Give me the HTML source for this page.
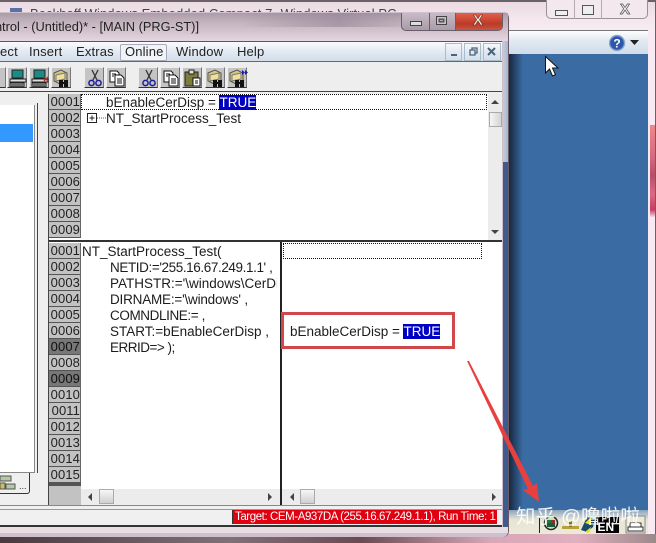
<!DOCTYPE html>
<html><head><meta charset="utf-8"><style>
html,body{margin:0;padding:0}
#p{position:relative;width:656px;height:543px;overflow:hidden;background:#f4e6ee;font-family:"Liberation Sans","Noto Sans CJK SC",sans-serif;color:#1a1a1a}
#p div,#p span.a{position:absolute}
.t{font-size:13.5px;line-height:16px;white-space:pre;color:#1c1c1c}
.l{position:static!important;display:block}
.i{position:static!important;display:block;padding-left:28px}
.n{left:49px;width:31px;height:15px;background:#c2c2c2;border-bottom:1px solid #555;border-right:1px solid #666;font-size:13px;line-height:16px;text-align:right;color:#222;letter-spacing:.1px;box-sizing:content-box;overflow:hidden}
.d{background:#777!important;color:#111!important}
.m{font-size:13px;line-height:16px;top:44px;white-space:pre;color:#222;letter-spacing:.15px}
.b{top:67px;width:20px;height:21px;background:#c4c4c4;border-bottom:1px solid #333;border-right:1px solid #777;border-top:1px solid #eee;border-left:1px solid #eee;box-sizing:border-box}
.b svg{position:absolute;left:0;top:0}
.hl{background:#0000c4;color:#fff}
</style></head><body><div id="p">
<svg width="0" height="0" style="position:absolute"><defs>
<symbol id="sc" viewBox="0 0 20 21"><path d="M7 2l5 10M13 2L8 12" stroke="#333" stroke-width="1.3" fill="none"/><circle cx="6.5" cy="15" r="2.6" fill="none" stroke="#1c1c9c" stroke-width="1.5"/><circle cx="13.5" cy="15" r="2.6" fill="none" stroke="#1c1c9c" stroke-width="1.5"/></symbol>
<symbol id="co" viewBox="0 0 20 21"><path d="M3 3h7l2 2v9H3z" fill="#fff" stroke="#111"/><path d="M8 7h6l3 3v8H8z" fill="#fff" stroke="#111"/><path d="M5 6h4M5 8h2M10 11h5M10 13h5M10 15h5" stroke="#111"/></symbol>
<symbol id="pa" viewBox="0 0 20 21"><rect x="2" y="4" width="13" height="14" fill="#7c7c3c" stroke="#222"/><rect x="6" y="2" width="5" height="4" fill="#ddd" stroke="#222"/><path d="M10 10h7v8h-7z" fill="#fff" stroke="#111"/><path d="M12 13h3M12 15h3" stroke="#111"/></symbol>
<symbol id="bi" viewBox="0 0 20 21"><path d="M2 5l7-3 6 3v8l-7 3-6-3z" fill="#d8c878" stroke="#555"/><path d="M4 7l9-2v6l-9 2z" fill="#eee0a0" stroke="#777"/><path d="M7 12h4v7H7zM12 12h4v7h-4z" fill="#111"/><path d="M10 14h3v2h-3z" fill="#111"/></symbol>
<symbol id="pc" viewBox="0 0 20 21"><rect x="4" y="2" width="11" height="8" fill="#1d8a86" stroke="#222"/><rect x="2" y="11" width="16" height="3" fill="#ddd" stroke="#222"/><path d="M2 15h14v4H2z" fill="#bbb" stroke="#222"/><path d="M4 16v3M6 16v3M8 16v3M10 16v3M12 16v3M14 16v3" stroke="#222"/></symbol>
</defs></svg>

<!-- outer window chrome -->
<div style="left:0;top:0;width:656px;height:30px;background:linear-gradient(#e9d8e0,#f3e6ec 60%,#f6ecf1)"></div>
<div style="left:0;top:0;width:656px;height:2px;background:#6a6068"></div>
<div style="left:10px;top:8px;width:12px;height:5px;background:#5a6ea8"></div>
<div style="left:30px;top:6px;font-size:13px;line-height:16px;white-space:pre;color:#444;letter-spacing:.08px">Beckhoff Windows Embedded Compact 7- Windows Virtual PC</div>
<div style="left:546px;top:0;width:102px;height:19px;background:#f3e8ee;border:1px solid #9a9098;border-top:0;border-radius:0 0 5px 5px;box-sizing:border-box"></div>
<div style="left:574px;top:0;width:1px;height:19px;background:#b5aab2"></div>
<div style="left:601px;top:0;width:1px;height:19px;background:#b5aab2"></div>
<div style="left:555px;top:10px;width:11px;height:4px;border:1px solid #555;background:#eee"></div>
<div style="left:582px;top:5px;width:10px;height:8px;border:1px solid #555;background:#eee"></div>
<div style="left:620px;top:1px;font-size:15px;font-weight:bold;line-height:18px;color:#eee;-webkit-text-stroke:.7px #555">X</div>

<!-- right panel -->
<div style="left:509px;top:30px;width:139px;height:24px;background:linear-gradient(#fdfdfe,#e2e9f2 40%,#cfdbe9);border-top:1px solid #777"></div>
<div style="left:509px;top:54px;width:139px;height:458px;background:#3a6ca3"></div>
<div style="left:509px;top:54px;width:14px;height:458px;background:linear-gradient(90deg,#17283f,#3a6ca3)"></div>
<svg style="position:absolute;left:609px;top:34px" width="36" height="18"><circle cx="8" cy="9" r="7.5" fill="#2b57ad" stroke="#8ea4ca" stroke-width="1.4"/><text x="8" y="13.5" font-family="Liberation Sans" font-size="12" font-weight="bold" text-anchor="middle" fill="#fff">?</text><path d="M21 6h9l-4.5 5z" fill="#222"/></svg>
<svg style="position:absolute;left:544px;top:55px" width="16" height="24"><path d="M1.5 1.5v16.5l4-4 3 7 3-1.3-3-6.7h5.5z" fill="#fff" stroke="#111"/></svg>
<!-- right edge -->
<div style="left:648px;top:30px;width:7px;height:513px;background:#f8e9f2"></div>
<div style="left:650px;top:125px;width:5px;height:92px;background:linear-gradient(#e88,#d56a80 35%,#b45068 55%,#dc6a84 75%,#c43e62 92%,#f3dbe6)"></div>
<div style="left:655px;top:0;width:1px;height:543px;background:#6a6068"></div>
<!-- tray -->
<div style="left:509px;top:510px;width:139px;height:24px;background:linear-gradient(#88a4bf,#e6e4d4 40%,#ece9d8)"></div>
<div style="left:0;top:534px;width:656px;height:9px;background:linear-gradient(90deg,#4a3a40,#807078 35%,#6a4a54 55%,#d8a8b8 75%,#e0b0c0 88%,#9a8a8a)"></div>
<div style="left:539px;top:518px;width:1px;height:15px;background:#222"></div>
<svg style="position:absolute;left:541px;top:513px" width="108" height="21">
<circle cx="10" cy="10" r="6.5" fill="#cfe0c0" stroke="#222" stroke-width="1.5"/><path d="M6 7h4v3H6z" fill="#1d7a3a"/><path d="M10 7h4v3h-4z" fill="#9a2a2a"/><path d="M6 10h8v4H6z" fill="#1d5a3a"/>
<path d="M21 13h17v3H21z" fill="#b8a03a"/><path d="M28 8h3v6h-3z" fill="#8a7020"/>
<path d="M46 4l8 2-2 8-6 5-6-2z" fill="#1a4a6a"/><path d="M44 10l6-6v8zM44 19l6-5-2 6z" fill="#e8e020"/>
<rect x="55" y="4" width="23" height="16" fill="#000"/><text x="56.5" y="18" font-family="Liberation Sans" font-weight="bold" font-size="12" fill="#fff">EN</text>
<rect x="85" y="3" width="19" height="17" fill="#ece9d8" stroke="#888"/><path d="M87 14h15v4H87zM89 10h11v4H89z" fill="#fff" stroke="#333"/>
</svg>
<div style="left:516px;top:503px;font-size:19.5px;line-height:28px;color:#fff;white-space:pre;letter-spacing:.2px;opacity:.9">知乎 @噜啦啦</div>

<!-- main window -->
<div style="left:0;top:12px;width:509px;height:525px;background:#cfc0cc;border-right:1px solid #6a5a66;border-radius:0 6px 6px 0;box-sizing:border-box;overflow:hidden"></div>
<div style="left:503px;top:40px;width:5px;height:122px;background:linear-gradient(90deg,#c4ccdc,#aab6cc)"></div>
<div style="left:503px;top:162px;width:5px;height:368px;background:#3e5a8e"></div>
<div style="left:0;top:13px;width:508px;height:28px;background:linear-gradient(#ac9ca8,#c2b2bc 30%,#d6c5d0 70%,#e4d8e2)"></div>
<div style="left:240px;top:13px;width:180px;height:14px;background:linear-gradient(90deg,rgba(150,125,140,0),#8f7f92 55%,rgba(150,125,140,0));opacity:.55"></div>
<div style="left:0;top:19px;width:199px;height:16px;overflow:hidden"><div style="right:0;top:0;font-size:12.8px;line-height:16px;white-space:pre;color:#222">ntrol - (Untitled)* - [MAIN (PRG-ST)]</div></div>
<div style="left:401px;top:13px;width:102px;height:18px;background:linear-gradient(#c9bac8,#a99ba8);border:1px solid #6a5e6a;border-top:0;border-radius:0 0 5px 5px;box-sizing:border-box;overflow:hidden">
<div style="left:53px;top:0;width:49px;height:18px;background:linear-gradient(#e4604a,#bb3a28 60%,#c85a48)"></div>
<div style="left:27px;top:0;width:1px;height:18px;background:#6a5e6a"></div>
<div style="left:53px;top:0;width:1px;height:18px;background:#6a5e6a"></div>
<div style="left:8px;top:8px;width:10px;height:3px;border:1px solid #444;background:#ddd"></div>
<div style="left:34px;top:3px;width:9px;height:7px;border:1px solid #444;box-shadow:inset 0 0 0 1.5px #cbbfca,inset 0 0 0 3px #555"></div>
<div style="left:71px;top:-1px;font-size:15px;line-height:18px;font-weight:bold;color:#f4efe8;-webkit-text-stroke:.6px #6a2a20">X</div>
</div>

<!-- menu row -->
<div style="left:0;top:41px;width:502px;height:21px;background:linear-gradient(#fafbfd,#dfe7f1 60%,#d3deea);border-top:1px solid #556;border-bottom:1px solid #667;box-sizing:border-box"></div>
<div class="m" style="left:-3px;">ject</div>
<div class="m" style="left:29px">Insert</div>
<div class="m" style="left:76px">Extras</div>
<div style="left:120px;top:44px;width:47px;height:17px;background:#f0f3f7;border:1px solid #aab;border-radius:2px;box-sizing:border-box"></div>
<div class="m" style="left:125px">Online</div>
<div class="m" style="left:176px">Window</div>
<div class="m" style="left:237px">Help</div>
<div style="left:445px;top:43px;width:17px;height:18px;border:1px solid #a9bccb;box-sizing:border-box"></div>
<div style="left:464px;top:43px;width:17px;height:18px;border:1px solid #a9bccb;box-sizing:border-box"></div>
<div style="left:483px;top:43px;width:18px;height:18px;border:1px solid #a9bccb;box-sizing:border-box"></div>
<svg style="position:absolute;left:445px;top:43px" width="56" height="18"><path d="M6 12h6" stroke="#4a6478" stroke-width="2"/><path d="M25 7h5v5h-5zM27 7V5h5v5h-2" fill="none" stroke="#4a6478" stroke-width="1.3"/><path d="M43 5l7 7M50 5l-7 7" stroke="#4a6478" stroke-width="2"/></svg>

<!-- toolbar -->
<div style="left:0;top:62px;width:502px;height:31px;background:#eeeeee;border-bottom:2px solid #444;box-sizing:border-box"></div>
<div class="b" style="left:-14px"></div>
<div class="b" style="left:7px"><svg width="20" height="21"><use href="#pc"/></svg></div>
<div class="b" style="left:29px"><svg width="20" height="21"><use href="#pc"/><path d="M14 9l4 4M18 9l-4 4" stroke="#b03030" stroke-width="1.3"/></svg></div>
<div class="b" style="left:51px"><svg width="20" height="21"><use href="#bi"/></svg></div>
<div class="b" style="left:84px"><svg width="20" height="21"><use href="#sc"/></svg></div>
<div class="b" style="left:106px"><svg width="20" height="21"><use href="#co"/></svg></div>
<div class="b" style="left:138px"><svg width="20" height="21"><use href="#sc"/></svg></div>
<div class="b" style="left:160px"><svg width="20" height="21"><use href="#co"/></svg></div>
<div class="b" style="left:182px"><svg width="20" height="21"><use href="#pa"/></svg></div>
<div class="b" style="left:205px"><svg width="20" height="21"><use href="#bi"/></svg></div>
<div class="b" style="left:227px"><svg width="20" height="21"><use href="#bi"/><path d="M14 2l3 2.500-3 2.500zM17 2l3 2.500-3 2.500z" fill="#1c1cb0"/></svg></div>

<!-- client -->
<div style="left:0;top:92px;width:502px;height:414px;background:#efefef"></div>
<div style="left:0;top:105px;width:35px;height:368px;background:#fff;border-right:1px solid #888;border-bottom:1px solid #888;box-sizing:border-box"></div>
<div style="left:37px;top:103px;width:1px;height:370px;background:#444"></div>
<div style="left:0;top:124px;width:33px;height:18px;background:#3399ff"></div>
<div style="left:0;top:473px;width:30px;height:21px;background:#efefef;border:1px solid #333;border-top:0;border-left:0;border-radius:0 0 3px 0;box-sizing:border-box"></div>
<svg style="position:absolute;left:0;top:474px" width="30" height="18"><rect x="0" y="2" width="11" height="5" fill="#b5c9a5" stroke="#555"/><rect x="0" y="9" width="5" height="6" fill="#c8c060" stroke="#555"/><rect x="6" y="10" width="9" height="5" fill="#b5c9a5" stroke="#555"/><text x="19" y="15" font-size="9" font-family="Liberation Sans" fill="#333">...</text></svg>

<div style="left:48px;top:94px;width:1px;height:412px;background:#444"></div>

<!-- upper editor -->
<div style="left:49px;top:94px;width:453px;height:147px;background:#fff"></div>
<div class="n" style="top:94px">0001</div><div class="n" style="top:110px">0002</div><div class="n" style="top:126px">0003</div><div class="n" style="top:142px">0004</div><div class="n" style="top:158px">0005</div><div class="n" style="top:174px">0006</div><div class="n" style="top:190px">0007</div><div class="n" style="top:206px">0008</div><div class="n" style="top:222px">0009</div>
<div style="left:81px;top:94px;width:406px;height:16px;border:1px dotted #111;box-sizing:border-box"></div>
<div class="t" style="left:106px;top:95px">bEnableCerDisp = <span class="hl">TRUE</span></div>
<svg style="position:absolute;left:86px;top:112px" width="22" height="13"><rect x="1.500" y="1.500" width="9" height="9" fill="#fff" stroke="#222"/><path d="M3.500 6h5M6 3.500v5" stroke="#222"/><path d="M11 6h9" stroke="#555" stroke-dasharray="1 1"/></svg>
<div class="t" style="left:106px;top:111px">NT_StartProcess_Test</div>
<div style="left:488px;top:94px;width:14px;height:146px;background:#ececec"></div>
<div style="left:489px;top:112px;width:13px;height:15px;background:linear-gradient(90deg,#f6f6f6,#d4d4d4);border:1px solid #aaa;box-sizing:border-box"></div>
<svg style="position:absolute;left:488px;top:96px" width="14" height="142"><path d="M3 8h8L7 4z" fill="#444"/><path d="M3 134h8l-4 4z" fill="#444"/></svg>
<div style="left:49px;top:240px;width:453px;height:2px;background:#333"></div>

<!-- lower editor -->
<div style="left:49px;top:242px;width:453px;height:263px;background:#fff"></div>
<div class="n" style="top:243px">0001</div><div class="n" style="top:259px">0002</div><div class="n" style="top:275px">0003</div><div class="n" style="top:291px">0004</div><div class="n" style="top:307px">0005</div><div class="n" style="top:323px">0006</div><div class="n d" style="top:339px">0007</div><div class="n" style="top:355px">0008</div><div class="n d" style="top:371px">0009</div><div class="n" style="top:387px">0010</div><div class="n" style="top:403px">0011</div><div class="n" style="top:419px">0012</div><div class="n" style="top:435px">0013</div><div class="n" style="top:451px">0014</div><div class="n" style="top:467px">0015</div>
<div style="left:49px;top:483px;width:32px;height:22px;background:#c2c2c2;border-top:3px solid #555;box-sizing:border-box"></div>
<div style="left:82px;top:243px;width:195px;height:240px;overflow:hidden">
<div class="t" style="left:0;top:1px"><span class="l">NT_StartProcess_Test(</span><span class="i" style="letter-spacing:-.4px">NETID:='255.16.67.249.1.1' ,</span><span class="i">PATHSTR:='\windows\CerDisp.exe' ,</span><span class="i" style="letter-spacing:-.2px">DIRNAME:='\windows' ,</span><span class="i" style="letter-spacing:-.4px">COMNDLINE:= ,</span><span class="i">START:=bEnableCerDisp ,</span><span class="i" style="letter-spacing:-.5px">ERRID=&gt; );</span></div></div>
<div style="left:280px;top:242px;width:2px;height:263px;background:#222"></div>
<div style="left:283px;top:243px;width:199px;height:16px;border:1px dotted #111;box-sizing:border-box"></div>
<div style="left:81px;top:489px;width:199px;height:16px;background:#ececec"></div>
<div style="left:282px;top:489px;width:220px;height:16px;background:#ececec"></div>
<div style="left:99px;top:489px;width:15px;height:15px;background:linear-gradient(#f6f6f6,#d0d0d0);border:1px solid #aaa;box-sizing:border-box"></div>
<div style="left:300px;top:489px;width:15px;height:15px;background:linear-gradient(#f6f6f6,#d0d0d0);border:1px solid #aaa;box-sizing:border-box"></div>
<svg style="position:absolute;left:0;top:489px" width="502" height="16"><path d="M92 4v8l-4-4zM268 4v8l4-4zM294 4v8l-4-4zM492 4v8l4-4z" fill="#444"/></svg>

<!-- red box -->
<div style="left:281px;top:312px;width:174px;height:37px;border:3px solid #d2474c;box-sizing:border-box"></div>
<div class="t" style="left:290px;top:324px">bEnableCerDisp = <span class="hl">TRUE</span></div>

<!-- status -->
<div style="left:0;top:505px;width:502px;height:22px;background:#f0f0f0;border-top:1px solid #888;box-sizing:border-box"></div>
<div style="left:0;top:509px;width:502px;height:1px;background:#999"></div>
<div style="left:0;top:525px;width:502px;height:2px;background:#333"></div>
<div style="left:0;top:527px;width:508px;height:6px;background:#e8dde3"></div>
<div style="left:232px;top:510px;width:265px;height:14px;background:#e00010;border-left:1px solid #333;box-sizing:border-box;color:#fff;font-size:11.5px;line-height:14px;letter-spacing:-.42px;white-space:pre;padding-left:2px;overflow:hidden">Target: CEM-A937DA (255.16.67.249.1.1), Run Time: 1</div>

<!-- arrow -->
<svg style="position:absolute;left:460px;top:355px" width="90" height="155"><path d="M7 6L68 134 63 135 79 147 77 128 73 131 9 6z" fill="#e8403e"/></svg>
</div></body></html>
